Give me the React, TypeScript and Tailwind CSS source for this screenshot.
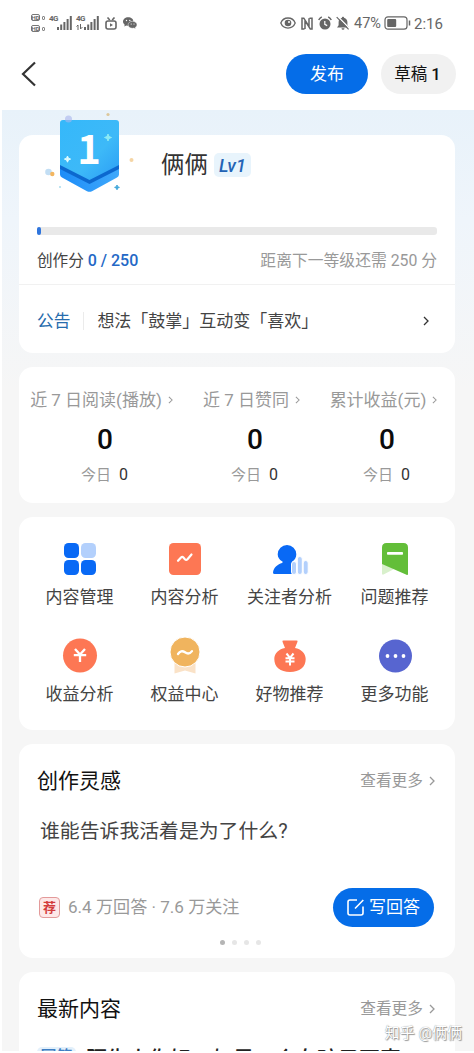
import React from 'react';

const Chevron = ({ className }: { className: string }) => (
  <svg viewBox="0 0 6 10" className={className} fill="none" stroke="currentColor" strokeWidth="1.3">
    <path d="M1 1l4 4-4 4" />
  </svg>
);

const Signal = () => (
  <svg width="15" height="14" viewBox="0 0 15 14" fill="#666">
    <rect x="0" y="11" width="2" height="3" />
    <rect x="3.2" y="8.5" width="2" height="5.5" />
    <rect x="6.4" y="6" width="2" height="8" />
    <rect x="9.6" y="3" width="2" height="11" />
    <rect x="12.8" y="0" width="2" height="14" />
  </svg>
);

const HdMark = () => (
  <div className="flex items-center gap-[2px]">
    <span className="flex h-[7px] w-[9px] items-center justify-center rounded-[2px] border border-[#777] text-[6px] font-bold leading-none">HD</span>
    <span className="h-[4px] w-[3px] rounded-[1px] border border-[#888]" />
  </div>
);

function StatusBar() {
  return (
    <div className="flex h-[46px] items-center pl-[31px] pr-[31px] text-[#666]">
      <div className="flex h-[18px] flex-col justify-between">
        <HdMark />
        <HdMark />
      </div>
      <div className="ml-[4px] h-[16px] w-[8px] text-[8px] font-bold leading-[8px] tracking-[-0.5px]">4G</div>
      <Signal />
      <div className="ml-[4px] flex h-[16px] w-[8px] flex-col text-[8px] font-bold leading-[8px] tracking-[-0.5px]">
        4G
        <svg width="7" height="6" viewBox="0 0 7 6" className="mt-[1px]" stroke="#666" fill="none">
          <path d="M2 6V1L.5 2.5M4.500 0v5L6.500 3" />
        </svg>
      </div>
      <Signal />
      <svg width="12" height="13" viewBox="0 0 12 13" className="ml-[6px]" fill="none" stroke="#666" strokeWidth="1.6">
        <rect x="1" y="4" width="10" height="8" rx="2" />
        <path d="M2.5.5L4.8 3M9.5.5L7.2 3" />
        <path d="M5 6.3v3.4L8 8z" fill="#666" stroke="none" />
      </svg>
      <svg width="14" height="12" viewBox="0 0 14 12" className="ml-[6px]">
        <path d="M5.2.2C2.2.2 0 2.2 0 4.6c0 1.300.7 2.400 1.700 3.200L1.300 9.500l2-1c.6.200 1.200.2 1.900.2C8.200 8.700 10.400 7 10.400 4.500S8.200.2 5.200.2z" fill="#666" />
        <path d="M9.500 4.300C7 4.300 5.100 5.800 5.100 7.800s1.900 3.500 4.400 3.500l1.400-.2 1.700.9-.4-1.500C13.300 9.900 14 8.900 14 7.800c0-2-2-3.500-4.500-3.500z" fill="#666" stroke="#fff" strokeWidth=".5" />
        <circle cx="3.500" cy="3.500" r=".7" fill="#fff" />
        <circle cx="6.800" cy="3.400" r=".7" fill="#fff" />
        <circle cx="8.200" cy="7" r=".6" fill="#fff" />
        <circle cx="11" cy="7" r=".6" fill="#fff" />
      </svg>
      <div className="ml-auto flex items-center">
        <svg width="16" height="12" viewBox="0 0 16 12" fill="none" stroke="#666" strokeWidth="1.300">
          <path d="M.8 6C3.500-.7 12.500-.7 15.200 6 12.500 12.700 3.500 12.700.8 6z" />
          <circle cx="8" cy="6" r="3.300" fill="#666" stroke="none" />
          <circle cx="9" cy="5" r="1" fill="#fff" stroke="none" />
        </svg>
        <svg width="12" height="13" viewBox="0 0 12 13" className="ml-[5px]" fill="none" stroke="#666" strokeWidth="1.500">
          <path d="M3.500 12H1V1.200h1.800L8 9.500V1.200M8.500 1.200H11v10.800H9.300L4 3.500V12" />
        </svg>
        <svg width="14" height="14" viewBox="0 0 14 14" className="ml-[5px]">
          <circle cx="7" cy="8" r="5.500" fill="#666" />
          <path d="M.7 4A7 7 0 013.800.9M13.300 4A7 7 0 0010.200.9" stroke="#666" strokeWidth="1.500" fill="none" />
          <path d="M6.800 5v3.400l2.400 1.200" stroke="#fff" strokeWidth="1.200" fill="none" />
        </svg>
        <svg width="14" height="14" viewBox="0 0 14 14" className="ml-[4px]">
          <path d="M7 .8c.6 0 1 .4 1 1 2.300.6 3.400 2.400 3.400 4.400v3l1.600 2.300H1L2.600 9.200v-3C2.600 4 4 2.400 6 1.800c0-.6.4-1 1-1zM5.500 12.300h3a1.500 1.500 0 01-3 0z" fill="#666" />
          <path d="M1.800.5l11.800 12" stroke="#fff" strokeWidth="1.300" />
          <path d="M.7 1.200l11.900 12.200" stroke="#666" strokeWidth="1.200" />
        </svg>
        <span className="ml-[4px] mt-[2px] w-[28px] text-[14.5px] leading-none">47%</span>
        <svg width="27" height="14" viewBox="0 0 27 14" className="ml-[2px]">
          <rect x="1" y=".8" width="22" height="12.400" rx="3" fill="none" stroke="#666" strokeWidth="1.200" />
          <rect x="3.200" y="3" width="9" height="8" rx="1" fill="#666" />
          <path d="M25.500 4.500v5" stroke="#666" strokeWidth="1.500" />
        </svg>
        <span className="ml-[3px] mt-[2px] w-[29px] whitespace-nowrap text-[15px] leading-none">2:16</span>
      </div>
    </div>
  );
}

function LevelBadge() {
  return (
    <svg width="96" height="84" viewBox="0 0 96 84" className="absolute left-[21px] top-[-25px]">
      <defs>
        <linearGradient id="lv" x1="0" y1="0" x2="1" y2="1">
          <stop offset="0" stopColor="#35b8fa" />
          <stop offset=".6" stopColor="#3db9f8" />
          <stop offset="1" stopColor="#2b9df5" />
        </linearGradient>
        <linearGradient id="lvb" x1="0" y1="0" x2="1" y2="0">
          <stop offset="0" stopColor="#1d8cf8" />
          <stop offset="1" stopColor="#3fa9fb" />
        </linearGradient>
      </defs>
      <path d="M20 40h59v24.500q0 2-2 3L52 81.200q-2.500 1.200-5 0L22 67.500q-2-1-2-3z" fill="url(#lvb)" />
      <path d="M20 40h59v19L49.500 74 20 59z" fill="#0c68cf" />
      <path d="M20 13q0-3 3-3h53q3 0 3 3v42L49.500 70 20 55z" fill="url(#lv)" />
      <circle cx="28.500" cy="9" r="3.500" fill="#a9b4ec" fillOpacity=".6" />
      <circle cx="68" cy="4.500" r="1.600" fill="#dcc79b" />
      <text x="49" y="54" textAnchor="middle" fill="#fff" fontFamily="'Noto Sans CJK SC', sans-serif" fontWeight="700" fontSize="40">1</text>
      <path d="M68 24l1 2.500 2.500 1-2.500 1-1 2.500-1-2.500-2.500-1 2.500-1z" fill="#8ceaf5" stroke="#8ceaf5" />
      <path d="M27.500 46l.9 2.200 2.200.9-2.200.9-.9 2.200-.9-2.200-2.200-.9 2.200-.9z" fill="#dffcff" stroke="#dffcff" />
      <path d="M77 75l.7 1.700 1.700.7-1.700.7-.7 1.700-.7-1.700-1.700-.7 1.700-.7z" fill="#45a9db" stroke="#45a9db" />
      <circle cx="91.500" cy="50" r="2" fill="#f5d5a5" />
      <circle cx="8.500" cy="62" r="3.300" fill="#c2def4" />
      <circle cx="12.300" cy="64" r="2.200" fill="#f3b660" />
      <circle cx="20" cy="77" r="1" fill="#a9dbed" />
    </svg>
  );
}

const stats = [
  { label: '近 7 日阅读(播放)', w: 'w-[172px]' },
  { label: '近 7 日赞同', w: 'w-[128px]' },
  { label: '累计收益(元)', w: 'w-[136px]' },
];

const icons: Record<string, React.ReactNode> = {
  内容管理: (
    <g fill="#0969f5">
      <rect x="4" y="3" width="15" height="15" rx="4.500" />
      <rect x="21" y="3" width="15" height="15" rx="4.500" fill="#b3d0fc" />
      <rect x="4" y="20" width="15" height="15" rx="4.500" />
      <rect x="21" y="20" width="15" height="15" rx="4.500" />
    </g>
  ),
  内容分析: (
    <g>
      <rect x="4" y="3" width="32" height="32" rx="4.500" fill="#fd7754" />
      <path d="M13 20.800l3-3.300q1.300-1.200 2.400 0l1.500 1.700q1.300 1.300 2.600 0l4-4.700" fill="none" stroke="#fff" strokeWidth="2.200" strokeLinecap="round" />
    </g>
  ),
  关注者分析: (
    <g>
      <path d="M17 5a9.300 9.300 0 019.300 9.300c0 3.200-1.500 5.700-4 7.200V34H4.500Q3 34 3 32.500c.5-5 5-8.300 9-9.500 1-.5.8-1.300 0-1.700-2.600-1.600-4.300-4-4.300-7A9.300 9.300 0 0117 5z" fill="#0969f5" />
      <g stroke="#fff" strokeWidth="1" fill="#b3d0fc">
        <rect x="21.500" y="21.500" width="5" height="13" rx="2.500" />
        <rect x="27.300" y="16.500" width="5" height="18" rx="2.500" />
        <rect x="33.200" y="20.500" width="5" height="14" rx="2.500" />
      </g>
    </g>
  ),
  问题推荐: (
    <g>
      <path d="M7 22l14 6-12.500 6.500Q7 35 7 33.500z" fill="#d8f0cb" />
      <path d="M7 7.500Q7 3 11.500 3h17Q33 3 33 7.500V34q0 1.500-1.500.8L7 24z" fill="#63be39" />
      <rect x="12" y="12" width="16" height="2.700" rx=".8" fill="#fff" />
    </g>
  ),
  收益分析: (
    <g>
      <circle cx="20" cy="18.500" r="17" fill="#fd7754" />
      <path d="M15 12l5 5.500 5-5.500M13.800 18.200h12.400M20 17.500V25" fill="none" stroke="#fff" strokeWidth="2.300" />
    </g>
  ),
  权益中心: (
    <g>
      <path d="M9.500 26h21v10.500L20 33.500 9.500 36.500z" fill="#fae2c7" />
      <circle cx="20" cy="15" r="15" fill="#f0b45e" stroke="#fff" strokeWidth="1" />
      <path d="M13 17q3-4.500 7-1.700t7-1.200" fill="none" stroke="#fff" strokeWidth="2.300" strokeLinecap="round" />
    </g>
  ),
  好物推荐: (
    <g fill="#fd7754">
      <path d="M12.500 4.700Q12 3.500 13.500 3.500h13q1.500 0 1 1.200L25 11C31 12 35.700 16.500 35.700 22c0 8-6 13-15.700 13S4.300 30 4.300 22C4.300 16.500 9 12 15 11z" />
      <path d="M16.500 16.500L20 20.800l3.500-4.300M15.500 21.300h9M15.500 24.500h9M20 21v7.500" fill="none" stroke="#fff" strokeWidth="2" />
    </g>
  ),
  更多功能: (
    <g>
      <circle cx="20.500" cy="19" r="16.500" fill="#5765d0" />
      <g fill="#fff">
        <circle cx="12.500" cy="19" r="1.900" />
        <circle cx="20.500" cy="19" r="1.900" />
        <circle cx="28.500" cy="19" r="1.900" />
      </g>
    </g>
  ),
};

const SectionHead = ({ title }: { title: string }) => (
  <div className="flex h-[28px] items-center justify-between">
    <h2 className="text-[21px] leading-[28px] text-[#111]">{title}</h2>
    <span className="flex items-center text-[15.7px] leading-[28px] text-[#999]">
      查看更多
      <Chevron className="ml-[6px] mr-[2px] h-[10px] w-[6px]" />
    </span>
  </div>
);

export default function App() {
  return (
    <div className="relative flex h-[1053px] w-[474px] flex-col overflow-hidden bg-white font-[Roboto,'Noto_Sans_CJK_SC',sans-serif] text-[#444]">
      <StatusBar />
      <header className="flex h-[64px] shrink-0 items-center pb-[8px] pl-[21px] pr-[18px]">
        <svg width="16" height="26" viewBox="0 0 16 26" fill="none" stroke="#333" strokeWidth="2.200">
          <path d="M14 1.500L2 13l12 11.500" />
        </svg>
        <button className="ml-auto h-[40px] w-[82px] rounded-full bg-[#056de8] text-[17px] leading-[40px] text-white">发布</button>
        <button className="ml-[13px] h-[40px] w-[75px] rounded-full bg-[#f1f1f1] pr-[2px] text-[16.5px] leading-[41px] text-[#111]">
          草稿 <span className="font-medium">1</span>
        </button>
      </header>

      <main className="ml-[2px] flex h-[941px] shrink-0 flex-col gap-[14px] overflow-hidden bg-[#f6f6f6] bg-[linear-gradient(to_bottom,#e8f2fa_0px,#eff5fb_110px,#f6f6f6_280px)] pl-[17px] pr-[19px] pt-[25px]">
        <section className="relative h-[218px] shrink-0 rounded-[14px] bg-white">
          <LevelBadge />
          <div className="flex h-[58px] items-center pl-[142px]">
            <span className="mt-[2px] text-[23.5px] leading-[30px] text-[#333]">俩俩</span>
            <span className="ml-[6px] mt-[2px] flex h-[24px] w-[37px] items-center justify-center rounded-[5px] bg-[#e8f4fc] text-[18px] font-medium italic text-[#2363b5]">Lv1</span>
          </div>
          <div className="ml-[18px] mt-[34px] h-[8px] w-[400px] rounded-[3px] bg-[#e9e9e9]">
            <div className="h-[8px] w-[4px] rounded-[2px] bg-[#2f75dd]" />
          </div>
          <div className="mt-[12px] flex h-[28px] items-center justify-between pl-[18px] pr-[18px] text-[15.6px] leading-[28px]">
            <span>
              创作分 <span className="text-[16px] font-medium text-[#2468c6]">0 / 250</span>
            </span>
            <span className="text-[15.8px] text-[#999]">距离下一等级还需 250 分</span>
          </div>
          <div className="mt-[9px] flex h-[69px] items-center border-t border-[#f1f1f1] pl-[18px] pr-[26px] pt-[3px]">
            <span className="pt-[2px] text-[16.7px] text-[#276cad]">公告</span>
            <span className="ml-[13px] h-[18px] w-px bg-[#ebebeb]" />
            <span className="ml-[13px] pt-[2px] text-[17px]">想法「鼓掌」互动变「喜欢」</span>
            <Chevron className="ml-auto h-[10px] w-[6px] text-[#333]" />
          </div>
        </section>

        <section className="flex h-[136px] shrink-0 rounded-[14px] bg-white pt-[20px]">
          {stats.map((s) => (
            <div key={s.label} className={'flex shrink-0 flex-col items-center ' + s.w}>
              <div className="flex h-[26px] items-center whitespace-nowrap pr-[7px] text-[17px] leading-[26px] text-[#999]">
                {s.label}
                <Chevron className="ml-[6px] h-[8px] w-[5px]" />
              </div>
              <div className="mt-[10px] h-[34px] text-[28px] font-medium leading-[34px] text-[#0c0c0c]">0</div>
              <div className="mt-[6px] flex h-[24px] items-center gap-[8px] pr-[1px] text-[15px] leading-[24px] text-[#999]">
                今日<span className="text-[16px] text-[#333]">0</span>
              </div>
            </div>
          ))}
        </section>

        <section className="grid h-[213px] shrink-0 grid-cols-[105px_105px_105px_105px] content-start gap-y-[14px] rounded-[14px] bg-white pl-[8px] pt-[23px]">
          {Object.entries(icons).map(([label, art]) => (
            <div key={label} className="flex h-[83px] flex-col items-center">
              <svg width="40" height="38" viewBox="0 0 40 38" className="shrink-0">{art}</svg>
              <span className="mt-[6px] whitespace-nowrap text-[17px] leading-[26px]">{label}</span>
            </div>
          ))}
        </section>

        <section className="h-[214px] shrink-0 rounded-[14px] bg-white px-[18px] pt-[23px]">
          <SectionHead title="创作灵感" />
          <p className="mt-[23px] pl-[3px] text-[19.85px] leading-[28px]">谁能告诉我活着是为了什么?</p>
          <div className="mt-[41px] flex h-[40px] items-center pl-[2px] pr-[3px]">
            <span className="flex h-[21px] w-[21px] items-center justify-center rounded-[4px] border border-[#e39a9a] bg-[#fde8e8] text-[13px] font-bold leading-none text-[#d33c3c]">荐</span>
            <span className="ml-[8px] pt-[2px] text-[17.1px] text-[#999]">6.4 万回答 · 7.6 万关注</span>
            <button className="ml-auto flex h-[39px] w-[101px] items-center justify-center gap-[5px] rounded-full bg-[#056de8] text-[17px] text-white">
              <svg width="17" height="17" viewBox="0 0 17 17" fill="none" stroke="#fff" strokeWidth="1.600">
                <path d="M10 1H3Q1 1 1 3v11q0 2 2 2h11q2 0 2-2V7.500M8 9.500L16.300 1" />
              </svg>
              <span className="pt-[2px]">写回答</span>
            </button>
          </div>
          <div className="mt-[13px] flex justify-center gap-[7px] pl-[6px]">
            <span className="h-[5px] w-[5px] rounded-full bg-[#b5b5b5]" />
            <span className="h-[5px] w-[5px] rounded-full bg-[#e6e6e6]" />
            <span className="h-[5px] w-[5px] rounded-full bg-[#e6e6e6]" />
            <span className="h-[5px] w-[5px] rounded-full bg-[#e6e6e6]" />
          </div>
        </section>

        <section className="h-[100px] shrink-0 rounded-t-[14px] bg-white px-[18px] pt-[23px]">
          <SectionHead title="最新内容" />
          <div className="mt-[19px] flex items-start whitespace-nowrap">
            <span className="mt-[5px] h-[24px] w-[39px] rounded-[5px] bg-[#e3f0fb] text-center text-[16px] font-medium leading-[20px] text-[#3f7fc4]">回答</span>
            <span className="ml-[10px] text-[21px] font-medium leading-[34px] text-[#222]">陌生人你好，如果一个女孩子不喜</span>
          </div>
        </section>
      </main>
      <div className="absolute bottom-[9px] right-[12px] text-[15px] leading-[22px] text-white [text-shadow:0_0_1px_#777,1px_1px_1px_#999]">知乎 @俩俩</div>
    </div>
  );
}
